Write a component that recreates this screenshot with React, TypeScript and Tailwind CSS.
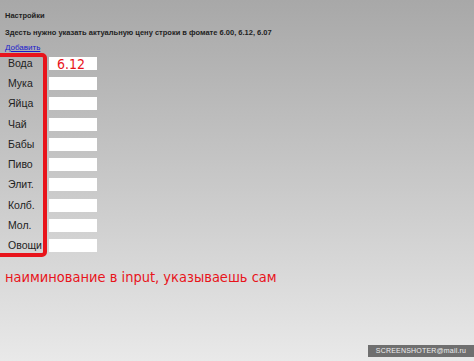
const items = ['Вода', 'Мука', 'Яйца', 'Чай', 'Бабы', 'Пиво', 'Элит.', 'Колб.', 'Мол.', 'Овощи'];

const redFont = { fontFamily: '"DejaVu Sans Condensed", "DejaVu Sans", Tahoma, sans-serif' };

export default function App() {
  return (
    <div
      className="relative w-[474px] h-[361px] overflow-hidden bg-gradient-to-b from-[#a8a8a8] to-[#e9e9e9] text-[#222]"
      style={{ fontFamily: '"Liberation Sans", Arial, sans-serif' }}
    >
      <div className="pl-[5px] pt-[10px]">
        <div className="text-[7.5px] font-bold leading-[11px]">Настройки</div>
        <div className="mt-[6px] text-[7.5px] font-bold leading-[11px]">
          Здесть нужно указать актуальную цену строки в фомате 6.00, 6.12, 6.07
        </div>
        <a className="mt-[4px] block text-[8px] leading-[11px] text-[#1a1acc] underline">Добавить</a>
      </div>

      <div className="relative flex">
        {/* red frame drawn over the labels */}
        <div className="absolute left-[-5px] top-[0px] h-[204px] w-[52px] rounded-[5px] border-[4px] border-[#e8141b]" />
        <div className="flex flex-col">
          {items.map((name) => (
            <div key={name} className="flex h-[20.3px] items-center">
              <span className="w-[49px] pl-[8px] text-[10.5px] leading-[13px]">{name}</span>
              <div className="h-[13px] w-[48px] bg-white" />
            </div>
          ))}
        </div>
        <span className="absolute left-[57px] top-[3px] text-[14px] leading-[16px] text-[#e8141b]" style={redFont}>
          6.12
        </span>
      </div>

      <div className="mt-[12px] pl-[5px] text-[14.5px] leading-[18px] text-[#e8141b]" style={redFont}>
        наиминование в input, указываешь сам
      </div>

      <div className="absolute right-[0px] bottom-[4px] flex h-[12px] w-[106px] items-center justify-center bg-[#6f6f6f] text-[7px] tracking-[0.2px] text-[#eee]">
        SCREENSHOTER@mail.ru
      </div>
    </div>
  );
}
